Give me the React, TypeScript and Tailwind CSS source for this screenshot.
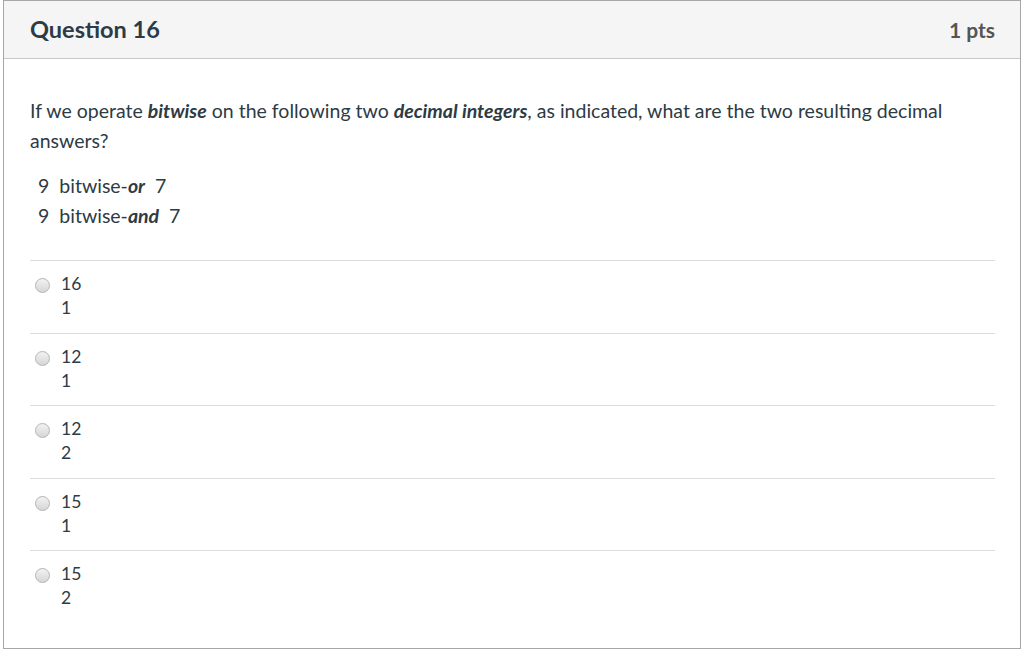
import React from 'react';

const answers = [
  ['16', '1'],
  ['12', '1'],
  ['12', '2'],
  ['15', '1'],
  ['15', '2'],
];

function Radio() {
  return (
    <span className="mt-[6px] h-[15px] w-[15px] shrink-0 rounded-full border border-[#b5b5b5] bg-gradient-to-b from-[#f2f2f2] to-[#d6d6d6]" />
  );
}

export default function App() {
  return (
    <div className="h-[649px] w-[1022px] bg-white font-['Lato','Liberation_Sans',sans-serif] text-[#2d3b45]">
      <div className="ml-[3px] h-[649px] w-[1018px] border border-[#a7a7a7]">
        <div className="flex h-[58px] items-center justify-between border-b border-[#c7c7c7] bg-[#f5f5f5] pl-[26px] pr-[25px]">
          <h2 className="text-[23.5px] font-bold text-[#2d3b45]">Question 16</h2>
          <span className="text-[21px] font-bold text-[#555]">1 pts</span>
        </div>

        <div className="pl-[26px] pr-[25px] pt-[37px]">
          <p className="text-[19.5px] leading-[30px]">
            If we operate <b><i>bitwise</i></b> on the following two <b><i>decimal integers</i></b>, as indicated,
            what are the two resulting decimal answers?
          </p>
          <div className="mt-[15px] pl-[8px] text-[19.5px] leading-[30px]">
            <div>
              9&nbsp; bitwise-<b><i>or</i></b>&nbsp;&nbsp;7
            </div>
            <div>
              9&nbsp; bitwise-<b><i>and</i></b>&nbsp;&nbsp;7
            </div>
          </div>

          <div className="mt-[29px]">
            {answers.map(([a, b], i) => (
              <div key={i} className="flex gap-[11px] border-t border-[#dcdcdc] pb-[12.5px] pl-[5px] pt-[11px]">
                <Radio />
                <div className="text-[17.5px] leading-[24px] text-[#2d3b45]">
                  <div>{a}</div>
                  <div>{b}</div>
                </div>
              </div>
            ))}
          </div>
        </div>
      </div>
    </div>
  );
}
